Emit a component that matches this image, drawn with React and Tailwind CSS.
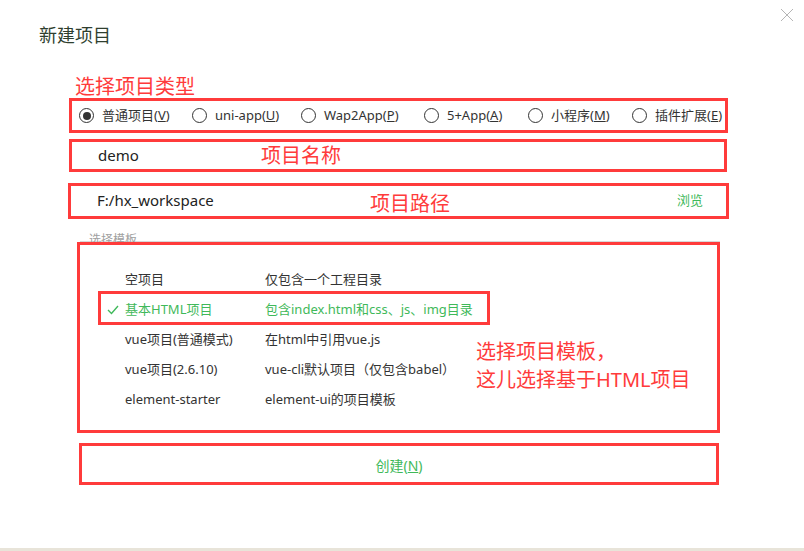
import React from "react";

const RED = "border-[#ff3b3b]";

function Radio({ checked }) {
  return (
    <span className="w-[15px] h-[15px] rounded-full border-[1.5px] border-[#333] flex items-center justify-center shrink-0">
      {checked && <span className="w-[8px] h-[8px] rounded-full bg-[#333]" />}
    </span>
  );
}

function RadioItem({ w, checked, label, k }) {
  return (
    <div className={`flex items-center gap-[8px] whitespace-nowrap ${w}`}>
      <Radio checked={checked} />
      <span className="text-[13px] text-[#333]">
        {label}(<span className="underline">{k}</span>)
      </span>
    </div>
  );
}

const rows = [
  ["空项目", "仅包含一个工程目录"],
  ["基本HTML项目", "包含index.html和css、js、img目录"],
  ["vue项目(普通模式)", "在html中引用vue.js"],
  ["vue项目(2.6.10)", "vue-cli默认项目（仅包含babel）"],
  ["element-starter", "element-ui的项目模板"],
];

export default function App() {
  return (
    <div
      className="w-[804px] h-[551px] relative bg-white overflow-hidden flex flex-col"
      style={{ fontFamily: '"Noto Sans", "Noto Sans CJK SC", sans-serif' }}
    >
      <svg className="absolute left-[780px] top-[8px]" width="14" height="14" viewBox="0 0 14 14">
        <path d="M1 1L13 13M13 1L1 13" stroke="#b5b5b5" strokeWidth="1" />
      </svg>

      <div className="h-[76px] pt-[23px] pl-[39px] text-[18px] leading-[24px] text-[#2f3f2f]">新建项目</div>
      <div className="h-[22px] pl-[75px] text-[20px] leading-[22px] text-[#ff3b3b]">选择项目类型</div>

      <div className={`ml-[69px] w-[659px] h-[35px] border-[3px] ${RED} flex items-center pl-[7px]`}>
        <RadioItem w="w-[113px]" checked label="普通项目" k="V" />
        <RadioItem w="w-[109px]" label="uni-app" k="U" />
        <RadioItem w="w-[123px]" label="Wap2App" k="P" />
        <RadioItem w="w-[104px]" label="5+App" k="A" />
        <RadioItem w="w-[104px]" label="小程序" k="M" />
        <RadioItem w="w-[90px]" label="插件扩展" k="E" />
      </div>

      <div className={`mt-[6px] ml-[69px] w-[658px] h-[33px] border-[3px] ${RED} flex items-center`}>
        <span className="ml-[26px] w-[163px] text-[15px] text-[#222]">demo</span>
        <span className="text-[20px] text-[#ff3b3b]">项目名称</span>
      </div>

      <div className={`mt-[11px] ml-[68px] w-[661px] h-[36px] border-[3px] ${RED} flex items-center`}>
        <span className="ml-[26px] w-[273px] text-[15px] text-[#222] -mt-[2px]">F:/hx_workspace</span>
        <span className="text-[20px] text-[#ff3b3b] mt-[6px]">项目路径</span>
        <span className="ml-auto mr-[23px] text-[13px] text-[#3fb95a]">浏览</span>
      </div>

      <div className="mt-[16px] ml-[80px] w-[640px] h-[7px] border-b border-[#d8d8d8] relative">
        <span className="absolute left-[9px] -top-[2px] text-[12px] leading-[14px] text-[#a0a0a0]">选择模板</span>
      </div>

      <div className={`ml-[77px] w-[643px] h-[191px] border-[3px] ${RED} relative pt-[20px]`}>
        {rows.map(([a, b], i) => (
          <div
            key={i}
            className={`relative h-[30px] flex items-center text-[13px] ${i === 1 ? "text-[#3fb95a]" : "text-[#333]"}`}
          >
            {i === 1 && (
              <>
                <div className={`absolute left-[18px] top-[-4px] w-[392px] h-[34px] border-[3px] ${RED}`} />
                <svg className="absolute left-[27px] top-[10px]" width="12" height="10" viewBox="0 0 12 10">
                  <path d="M1 5L4.5 8.5L11 1" stroke="#3fb95a" strokeWidth="1.4" fill="none" />
                </svg>
              </>
            )}
            <span className="ml-[45px] w-[140px]">{a}</span>
            <span>{b}</span>
          </div>
        ))}
        <div className="absolute left-[396px] top-[93px] text-[20px] leading-[28px] text-[#ff3b3b]">
          <div>选择项目模板，</div>
          <div>这儿选择基于HTML项目</div>
        </div>
      </div>

      <div className={`mt-[10px] ml-[79px] w-[640px] h-[42px] border-[3px] ${RED} flex items-center justify-center`}>
        <span className="text-[14px] text-[#3fb95a] mt-[2px]">
          创建(<span className="underline">N</span>)
        </span>
      </div>

      <div className="absolute left-0 bottom-0 w-full h-[3px] bg-[#e8e4d9]" />
    </div>
  );
}
